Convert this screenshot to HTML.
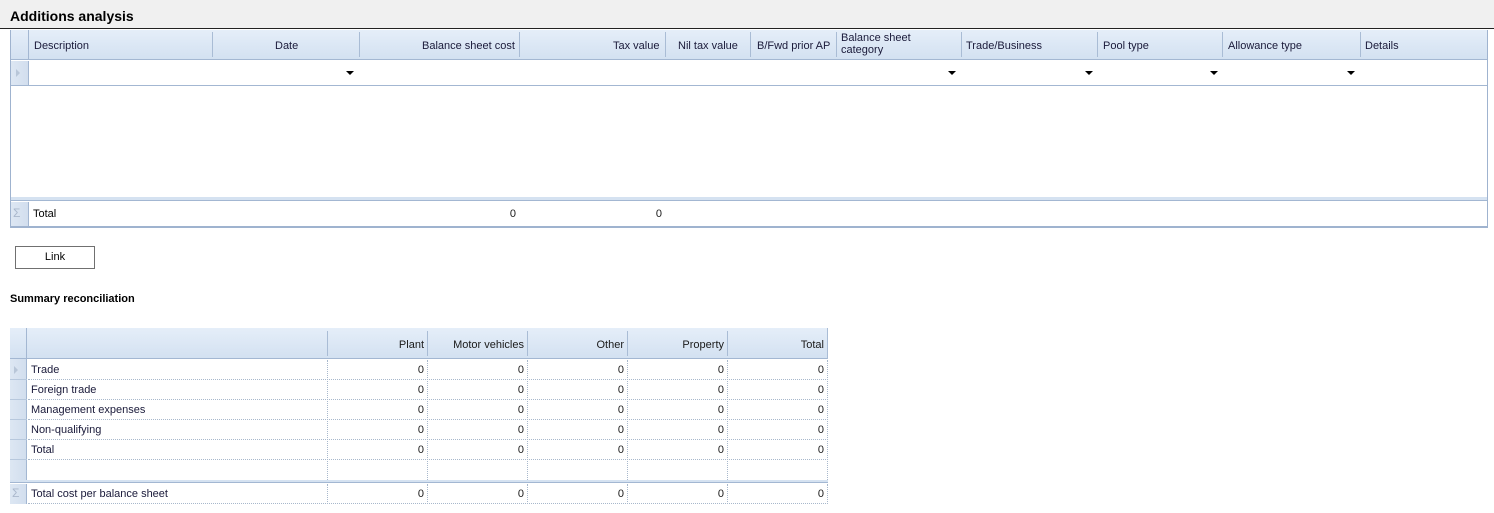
<!DOCTYPE html>
<html><head><meta charset="utf-8"><style>
*{margin:0;padding:0;box-sizing:border-box}
body{width:1494px;height:513px;background:#fff;position:relative;overflow:hidden;font-family:Tahoma,"Liberation Sans","DejaVu Sans",sans-serif;font-size:11px;color:#1a1a3a}
.a{position:absolute}
.hd{background:linear-gradient(#e5eef9,#d3e1f1)}
.rh{background:linear-gradient(90deg,#dde7f3,#d2deee)}
.sep{position:absolute;width:1px;background:#a9bcd5}
.t{position:absolute;white-space:nowrap;line-height:13px}
.arr{position:absolute;width:0;height:0;border-left:4px solid transparent;border-right:4px solid transparent;border-top:4px solid #000}
.dh{position:absolute;height:0;border-top:1px dotted #a8b8cc}
.dv{position:absolute;width:0;border-left:1px dotted #a8b8cc}
.num{position:absolute;text-align:right;color:#1a1a1a;line-height:13px}
</style></head><body>
<div class="a" style="left:0;top:0;width:1494px;height:29px;background:#f0f0f0;border-bottom:1px solid #222"></div>
<div class="t" style="left:10px;top:8px;font-size:14px;font-weight:bold;color:#000;line-height:16px">Additions analysis</div>

<div class="a" style="left:10px;top:30px;width:1478px;height:198px;border:1px solid #9fb3cf;border-top:none;border-bottom:2px solid #9fb3cf"></div>
<div class="a hd" style="left:11px;top:30px;width:1476px;height:30px;border-bottom:1px solid #a3b7d2"></div>
<div class="a rh" style="left:11px;top:61px;width:18px;height:24px;border-right:1px solid #a3b7d2"></div>
<div class="a" style="left:11px;top:85px;width:1476px;height:1px;background:#a3b7d2"></div>
<div class="a" style="left:11px;top:30px;width:18px;height:30px;border-right:1px solid #a3b7d2"></div>
<div class="a" style="left:16px;top:69px;width:0;height:0;border-top:4px solid transparent;border-bottom:4px solid transparent;border-left:4px solid #b8c6d8"></div>
<div class="sep" style="left:212px;top:32px;height:25px"></div>
<div class="sep" style="left:359px;top:32px;height:25px"></div>
<div class="sep" style="left:519px;top:32px;height:25px"></div>
<div class="sep" style="left:665px;top:32px;height:25px"></div>
<div class="sep" style="left:750px;top:32px;height:25px"></div>
<div class="sep" style="left:836px;top:32px;height:25px"></div>
<div class="sep" style="left:961px;top:32px;height:25px"></div>
<div class="sep" style="left:1097px;top:32px;height:25px"></div>
<div class="sep" style="left:1222px;top:32px;height:25px"></div>
<div class="sep" style="left:1360px;top:32px;height:25px"></div>
<div class="t" style="left:34px;top:40px">Description</div>
<div class="t" style="left:275px;top:40px">Date</div>
<div class="t" style="left:422px;top:40px">Balance sheet cost</div>
<div class="t" style="left:613px;top:40px">Tax value</div>
<div class="t" style="left:678px;top:40px">Nil tax value</div>
<div class="t" style="left:757px;top:40px">B/Fwd prior AP</div>
<div class="t" style="left:841px;top:32px;line-height:12px">Balance sheet<br>category</div>
<div class="t" style="left:966px;top:40px">Trade/Business</div>
<div class="t" style="left:1103px;top:40px">Pool type</div>
<div class="t" style="left:1228px;top:40px">Allowance type</div>
<div class="t" style="left:1365px;top:40px">Details</div>
<div class="arr" style="left:346px;top:71px"></div>
<div class="arr" style="left:948px;top:71px"></div>
<div class="arr" style="left:1085px;top:71px"></div>
<div class="arr" style="left:1210px;top:71px"></div>
<div class="arr" style="left:1347px;top:71px"></div>
<div class="a" style="left:11px;top:197px;width:1476px;height:4px;background:#d5e2f1;border-bottom:1px solid #a3b7d2"></div>
<div class="a rh" style="left:11px;top:202px;width:18px;height:24px;border-right:1px solid #a3b7d2"></div>
<div class="t" style="left:13px;top:207px;color:#aab8cc;font-size:12px">Σ</div>
<div class="t" style="left:33px;top:208px;color:#000">Total</div>
<div class="num" style="left:440px;top:208px;width:76px">0</div>
<div class="num" style="left:600px;top:208px;width:62px">0</div>

<div class="a" style="left:15px;top:246px;width:80px;height:23px;border:1px solid #707070;background:#fff"></div>
<div class="t" style="left:15px;top:251px;width:80px;text-align:center;color:#000">Link</div>

<div class="t" style="left:10px;top:293px;font-weight:bold;color:#000">Summary reconciliation</div>

<div class="a hd" style="left:10px;top:328px;width:818px;height:31px;border-bottom:1px solid #a3b7d2"></div>
<div class="a rh" style="left:10px;top:359px;width:17px;height:121px;border-right:1px solid #a3b7d2"></div>
<div class="a" style="left:10px;top:328px;width:17px;height:31px;border-right:1px solid #a3b7d2"></div>
<div class="sep" style="left:327px;top:331px;height:25px"></div>
<div class="sep" style="left:427px;top:331px;height:25px"></div>
<div class="sep" style="left:527px;top:331px;height:25px"></div>
<div class="sep" style="left:627px;top:331px;height:25px"></div>
<div class="sep" style="left:727px;top:331px;height:25px"></div>
<div class="sep" style="left:827px;top:328px;height:31px"></div>
<div class="num" style="left:330px;top:339px;width:94px">Plant</div>
<div class="num" style="left:430px;top:339px;width:94px">Motor vehicles</div>
<div class="num" style="left:530px;top:339px;width:94px">Other</div>
<div class="num" style="left:630px;top:339px;width:94px">Property</div>
<div class="num" style="left:730px;top:339px;width:94px">Total</div>
<div class="a" style="left:14px;top:366px;width:0;height:0;border-top:4px solid transparent;border-bottom:4px solid transparent;border-left:4px solid #b8c6d8"></div>
<div class="a" style="left:10px;top:379px;width:17px;height:1px;background:#b7c8dd"></div>
<div class="a" style="left:10px;top:399px;width:17px;height:1px;background:#b7c8dd"></div>
<div class="a" style="left:10px;top:419px;width:17px;height:1px;background:#b7c8dd"></div>
<div class="a" style="left:10px;top:439px;width:17px;height:1px;background:#b7c8dd"></div>
<div class="a" style="left:10px;top:459px;width:17px;height:1px;background:#b7c8dd"></div>
<div class="dh" style="left:28px;top:379px;width:800px"></div>
<div class="dh" style="left:28px;top:399px;width:800px"></div>
<div class="dh" style="left:28px;top:419px;width:800px"></div>
<div class="dh" style="left:28px;top:439px;width:800px"></div>
<div class="dh" style="left:28px;top:459px;width:800px"></div>
<div class="dv" style="left:327px;top:360px;height:120px"></div>
<div class="dv" style="left:427px;top:360px;height:120px"></div>
<div class="dv" style="left:527px;top:360px;height:120px"></div>
<div class="dv" style="left:627px;top:360px;height:120px"></div>
<div class="dv" style="left:727px;top:360px;height:120px"></div>
<div class="dv" style="left:827px;top:360px;height:120px"></div>
<div class="t" style="left:31px;top:364px">Trade</div>
<div class="t" style="left:31px;top:384px">Foreign trade</div>
<div class="t" style="left:31px;top:404px">Management expenses</div>
<div class="t" style="left:31px;top:424px">Non-qualifying</div>
<div class="t" style="left:31px;top:444px">Total</div>
<div class="a" style="left:10px;top:480px;width:818px;height:3px;background:#d5e2f1;border-bottom:1px solid #a3b7d2"></div>
<div class="a rh" style="left:10px;top:484px;width:17px;height:20px;border-right:1px solid #a3b7d2"></div>
<div class="t" style="left:12px;top:487px;color:#aab8cc;font-size:12px">Σ</div>
<div class="t" style="left:31px;top:488px">Total cost per balance sheet</div>
<div class="dh" style="left:28px;top:503px;width:800px"></div>
<div class="dv" style="left:327px;top:484px;height:20px"></div>
<div class="dv" style="left:427px;top:484px;height:20px"></div>
<div class="dv" style="left:527px;top:484px;height:20px"></div>
<div class="dv" style="left:627px;top:484px;height:20px"></div>
<div class="dv" style="left:727px;top:484px;height:20px"></div>
<div class="dv" style="left:827px;top:484px;height:20px"></div>
<div class="num" style="left:330px;top:360px;width:94px;line-height:20px">0<br>0<br>0<br>0<br>0</div>
<div class="num" style="left:430px;top:360px;width:94px;line-height:20px">0<br>0<br>0<br>0<br>0</div>
<div class="num" style="left:530px;top:360px;width:94px;line-height:20px">0<br>0<br>0<br>0<br>0</div>
<div class="num" style="left:630px;top:360px;width:94px;line-height:20px">0<br>0<br>0<br>0<br>0</div>
<div class="num" style="left:730px;top:360px;width:94px;line-height:20px">0<br>0<br>0<br>0<br>0</div>
<div class="num" style="left:330px;top:488px;width:94px">0</div>
<div class="num" style="left:430px;top:488px;width:94px">0</div>
<div class="num" style="left:530px;top:488px;width:94px">0</div>
<div class="num" style="left:630px;top:488px;width:94px">0</div>
<div class="num" style="left:730px;top:488px;width:94px">0</div>
</body></html>
